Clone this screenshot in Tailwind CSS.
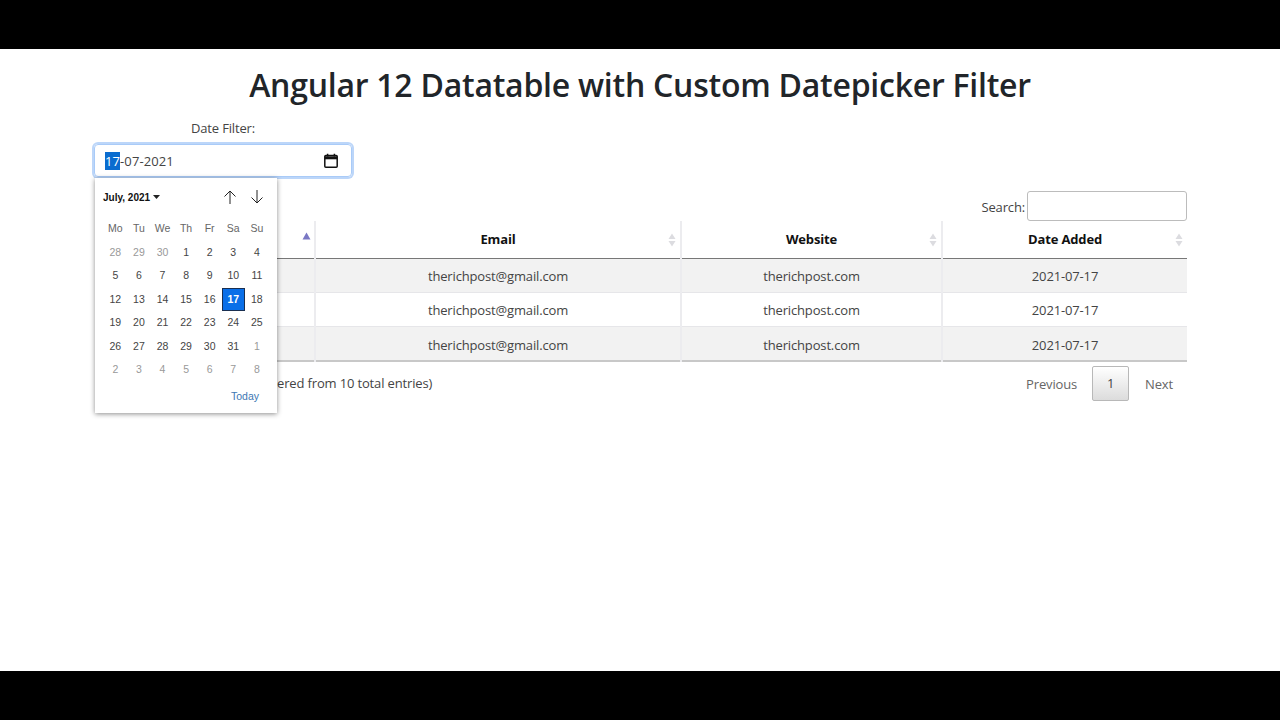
<!DOCTYPE html>
<html lang="en">
<head>
  <meta charset="UTF-8" />
  <title>Angular 12 Datatable with Custom Datepicker Filter</title>
  <script src="https://cdn.jsdelivr.net/npm/@tailwindcss/browser@4"></script>
</head>
<body class="bg-white font-['Open_Sans',sans-serif] text-[#212529] overflow-hidden">
  <div class="h-[720px] flex flex-col">
    <div class="h-[49px] bg-black"></div>

    <main class="relative flex-1 px-[93px]">
      <h1 class="h-[72px] pt-[13px] text-center text-[32px] leading-[46px] font-semibold tracking-[-0.25px]">Angular 12 Datatable with Custom Datepicker Filter</h1>

      <div class="w-[260px]">
        <label class="block h-[23px] text-center text-[13px] leading-[15px] tracking-[-0.15px] text-[#444]">Date Filter:</label>
        <div class="flex items-center justify-between h-[33px] ml-[1px] w-[258px] rounded-[4px] border border-[#a9cbf8] pl-[10px] pr-[12px] shadow-[0_0_0_2px_#bcd6f9]">
          <span class="pt-[2px] text-[13px] tracking-[0.1px] text-[#444]"><span class="bg-[#0a6ccf] text-white">17</span>-07-2021</span>
          <svg class="w-[16px] h-[16px]" viewBox="0 0 16 16" fill="none" stroke="#111" stroke-width="1.5">
            <rect x="1.800" y="2.600" width="12.400" height="11.600" rx="1"/>
            <path d="M1.800 4.800h12.400" stroke-width="3"/>
            <path d="M4.600 0.800v2.600M11.400 0.800v2.600"/>
          </svg>
        </div>
      </div>

      <div class="flex justify-end items-center gap-[2px] h-[30px] mt-[14px] text-[13px] tracking-[-0.15px] text-[#444]">
        <span class="mt-[3px]">Search:</span>
        <input class="w-[160px] h-[30px] rounded-[3px] border border-[#bcbcbc] bg-white" />
      </div>

      <table class="ml-[2px] w-[1092px] table-fixed border-collapse text-[13px] tracking-[-0.15px]">
        <colgroup>
          <col class="w-[220px]" />
          <col class="w-[366px]" />
          <col class="w-[261px]" />
          <col class="w-[245px]" />
        </colgroup>
        <thead class="[&_th]:pt-[1px]">
          <tr class="h-[37px] border-b border-[#777] text-[#111]">
            <th class="relative border-r-2 border-[#ececef] font-bold">
              <svg class="absolute right-[3px] top-[11px] w-[9px] h-[8px]" viewBox="0 0 9 8"><path d="M4.500 0.500 8.500 7.500H0.500Z" fill="#7a78c4"/></svg>
            </th>
            <th class="relative border-r-2 border-[#ececef] font-bold">Email
              <svg class="absolute right-[4px] top-[12px] w-[8px] h-[14px]" viewBox="0 0 8 14" fill="#dcdce0"><path d="M4 0.500 7.500 6H0.500ZM4 13.500 0.500 8H7.500Z"/></svg>
            </th>
            <th class="relative border-r-2 border-[#ececef] font-bold">Website
              <svg class="absolute right-[4px] top-[12px] w-[8px] h-[14px]" viewBox="0 0 8 14" fill="#dcdce0"><path d="M4 0.500 7.500 6H0.500ZM4 13.500 0.500 8H7.500Z"/></svg>
            </th>
            <th class="relative font-bold">Date Added
              <svg class="absolute right-[4px] top-[12px] w-[8px] h-[14px]" viewBox="0 0 8 14" fill="#dcdce0"><path d="M4 0.500 7.500 6H0.500ZM4 13.500 0.500 8H7.500Z"/></svg>
            </th>
          </tr>
        </thead>
        <tbody class="text-center text-[#444] [&_td]:pt-[4px]">
          <tr class="h-[34px] bg-[#f2f2f2] border-b border-[#e6e6e9]">
            <td class="border-r-2 border-[#ececef]"></td>
            <td class="border-r-2 border-[#ececef]">therichpost@gmail.com</td>
            <td class="border-r-2 border-[#ececef]">therichpost.com</td>
            <td>2021-07-17</td>
          </tr>
          <tr class="h-[34px] bg-white border-b border-[#e6e6e9]">
            <td class="border-r-2 border-[#ececef]"></td>
            <td class="border-r-2 border-[#ececef]">therichpost@gmail.com</td>
            <td class="border-r-2 border-[#ececef]">therichpost.com</td>
            <td>2021-07-17</td>
          </tr>
          <tr class="h-[35px] bg-[#f2f2f2] border-b-2 border-[#c8c8c8]">
            <td class="border-r-2 border-[#ececef]"></td>
            <td class="border-r-2 border-[#ececef]">therichpost@gmail.com</td>
            <td class="border-r-2 border-[#ececef]">therichpost.com</td>
            <td>2021-07-17</td>
          </tr>
        </tbody>
      </table>

      <div class="flex justify-between items-center mt-[4px] h-[35px] text-[13px] tracking-[-0.15px] text-[#444]">
        <span class="pl-[184px] pt-[1px]">ered from 10 total entries)</span>
        <div class="flex items-center text-[#666]">
          <span class="mr-[15px] pt-[2px]">Previous</span>
          <span class="w-[37px] h-[35px] flex items-center justify-center rounded-[2px] border border-[#b8b8b8] bg-gradient-to-b from-white to-[#dcdcdc] text-[#444]">1</span>
          <span class="ml-[16px] mr-[14px] pt-[2px]">Next</span>
        </div>
      </div>

      <!-- datepicker popup -->
      <div class="absolute left-[95px] top-[129px] w-[182px] h-[235px] bg-white shadow-[0_1px_5px_rgba(0,0,0,0.45)] font-['Liberation_Sans',sans-serif] text-[10.5px] text-[#444]">
        <div class="flex items-center justify-between h-[38px] pl-[8px] pr-[13px]">
          <span class="flex items-center gap-[3px] text-[10px] font-bold text-[#111]">July, 2021
            <svg class="w-[7px] h-[4px]" viewBox="0 0 7 4"><path d="M0 0h7L3.500 4Z" fill="#222"/></svg>
          </span>
          <span class="flex gap-[13px]">
            <svg class="w-[14px] h-[14px]" viewBox="0 0 14 14" fill="none" stroke="#222" stroke-width="1"><path d="M7 14V1M1.500 6.500 7 1l5.500 5.500"/></svg>
            <svg class="w-[14px] h-[14px]" viewBox="0 0 14 14" fill="none" stroke="#222" stroke-width="1"><path d="M7 0v13M1.500 7.500 7 13l5.500-5.500"/></svg>
          </span>
        </div>
        <div class="grid grid-cols-[repeat(7,23.6px)] auto-rows-[23.6px] items-center justify-items-center pl-[8.500px] pt-[1px]">
          <span class="text-[#666]">Mo</span><span class="text-[#666]">Tu</span><span class="text-[#666]">We</span><span class="text-[#666]">Th</span><span class="text-[#666]">Fr</span><span class="text-[#666]">Sa</span><span class="text-[#666]">Su</span>
          <span class="text-[#999]">28</span><span class="text-[#999]">29</span><span class="text-[#999]">30</span><span>1</span><span>2</span><span>3</span><span>4</span>
          <span>5</span><span>6</span><span>7</span><span>8</span><span>9</span><span>10</span><span>11</span>
          <span>12</span><span>13</span><span>14</span><span>15</span><span>16</span>
          <span class="w-[23px] h-[23px] flex items-center justify-center bg-[#0a6fe8] border border-[#1a2f50] text-white font-bold">17</span>
          <span>18</span>
          <span>19</span><span>20</span><span>21</span><span>22</span><span>23</span><span>24</span><span>25</span>
          <span>26</span><span>27</span><span>28</span><span>29</span><span>30</span><span>31</span><span class="text-[#999]">1</span>
          <span class="text-[#999]">2</span><span class="text-[#999]">3</span><span class="text-[#999]">4</span><span class="text-[#999]">5</span><span class="text-[#999]">6</span><span class="text-[#999]">7</span><span class="text-[#999]">8</span>
        </div>
        <div class="flex justify-end pr-[18px] pt-[7px] text-[#3d78b3]">Today</div>
      </div>
    </main>

    <div class="h-[49px] bg-black"></div>
  </div>
</body>
</html>
